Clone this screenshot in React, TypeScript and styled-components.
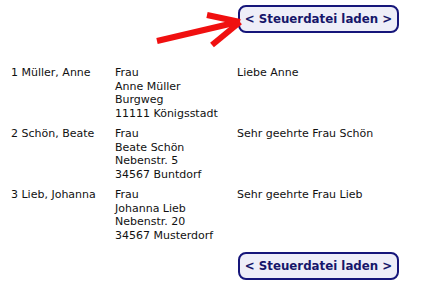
import React from "react"
import styled, { createGlobalStyle } from "styled-components"

const GlobalStyle = createGlobalStyle`
  html, body {
    margin: 0;
    padding: 0;
    background: #ffffff;
  }
  body {
    font-family: "DejaVu Sans", Verdana, sans-serif;
  }
`

const Page = styled.div`
  position: relative;
  width: 421px;
  height: 296px;
  padding-top: 5px;
  box-sizing: border-box;
`

const ButtonRow = styled.div<{ $gap: number }>`
  display: flex;
  padding-left: 238px;
  margin-top: ${({ $gap }) => $gap}px;
`

const LoadButton = styled.button`
  width: 161px;
  height: 28px;
  box-sizing: border-box;
  border: 2px solid #16167a;
  border-radius: 8px;
  background: #eeeef8;
  color: #16166a;
  font-family: "DejaVu Sans", Verdana, sans-serif;
  font-weight: bold;
  font-size: 11.8px;
  padding: 0;
  cursor: pointer;
`

const Table = styled.div`
  display: grid;
  grid-template-columns: 104px 122px auto;
  row-gap: 6.3px;
  margin-top: 33px;
  padding-left: 11px;
  font-size: 11px;
  line-height: 13.67px;
  color: #111111;
`

const Cell = styled.div`
  white-space: nowrap;
`

const Arrow = styled.svg`
  position: absolute;
  left: 150px;
  top: 10px;
  pointer-events: none;
`

const people = [
  {
    name: "1 Müller, Anne",
    address: ["Frau", "Anne Müller", "Burgweg", "11111 Königsstadt"],
    salutation: "Liebe Anne",
  },
  {
    name: "2 Schön, Beate",
    address: ["Frau", "Beate Schön", "Nebenstr. 5", "34567 Buntdorf"],
    salutation: "Sehr geehrte Frau Schön",
  },
  {
    name: "3 Lieb, Johanna",
    address: ["Frau", "Johanna Lieb", "Nebenstr. 20", "34567 Musterdorf"],
    salutation: "Sehr geehrte Frau Lieb",
  },
]

export default () => (
  <Page>
    <GlobalStyle />
    <ButtonRow $gap={0}>
      <LoadButton>&lt; Steuerdatei laden &gt;</LoadButton>
    </ButtonRow>
    <Table>
      {people.map((p) => (
        <React.Fragment key={p.name}>
          <Cell>{p.name}</Cell>
          <Cell>
            {p.address.map((line) => (
              <div key={line}>{line}</div>
            ))}
          </Cell>
          <Cell>{p.salutation}</Cell>
        </React.Fragment>
      ))}
    </Table>
    <ButtonRow $gap={9}>
      <LoadButton>&lt; Steuerdatei laden &gt;</LoadButton>
    </ButtonRow>
    <Arrow width="100" height="45" viewBox="0 0 100 45">
      <g stroke="#f01010" strokeWidth="6" strokeLinecap="butt" fill="none">
        <line x1="7" y1="31" x2="88" y2="12" />
        <line x1="57" y1="5" x2="90" y2="12" />
        <line x1="62" y1="35" x2="90" y2="12" />
      </g>
    </Arrow>
  </Page>
)
